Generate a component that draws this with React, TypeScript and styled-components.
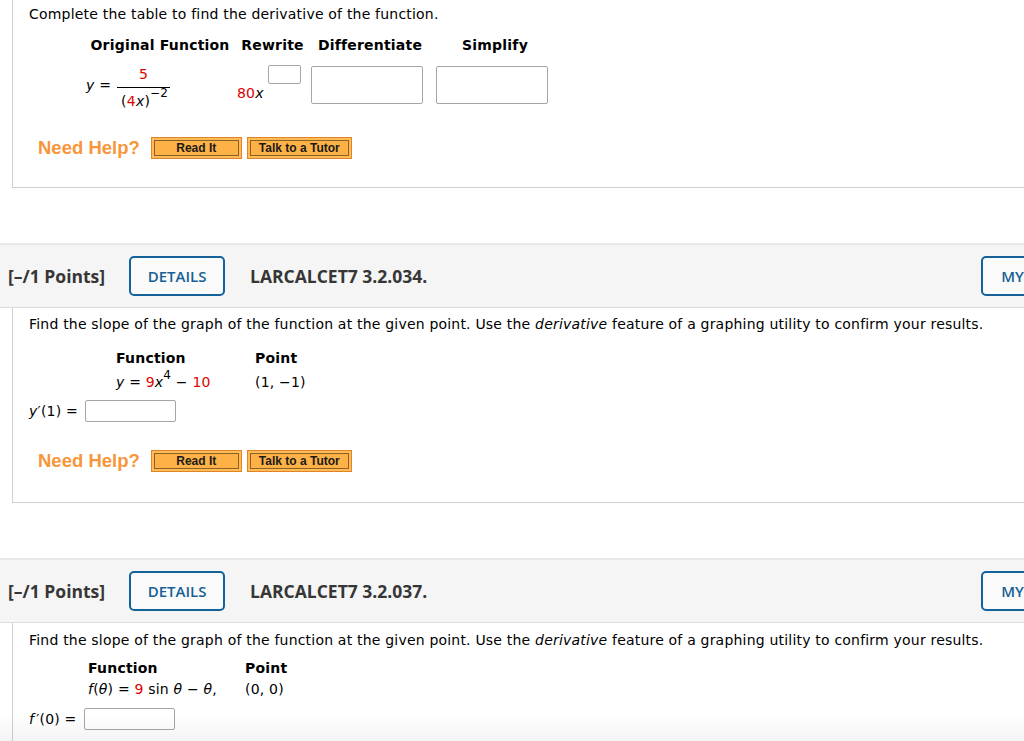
import styled, { createGlobalStyle } from "styled-components";

const GlobalStyle = createGlobalStyle`
    html, body {
        margin: 0;
        padding: 0;
        background: #fff;
        overflow: hidden;
    }
`;

const Page = styled.div`
    width: 1064px;
    font-family: "DejaVu Sans", Verdana, sans-serif;
    font-size: 14px;
    letter-spacing: 0.2px;
    color: #000;
`;

const QuestionBody = styled.div`
    margin-left: 12px;
    border-left: 1px solid #cfcfcf;
    border-bottom: 1px solid #cfcfcf;
    padding: ${(p: { $top: number; $bottom: number }) => `${p.$top}px 0 ${p.$bottom}px 16px`};
`;

const OpenBody = styled.div`
    margin-left: 12px;
    border-left: 1px solid #cfcfcf;
    padding: 9px 0 40px 16px;
`;

const Prompt = styled.div`
    line-height: 17px;
    white-space: nowrap;
`;

const Header = styled.div`
    margin-top: 55px;
    height: 62px;
    border-top: 2px solid #e9e9e9;
    border-bottom: 1px solid #dcdcdc;
    background: #f5f5f5;
    padding: 0 20px 0 8px;
    display: flex;
    align-items: center;
    font-family: "Open Sans", sans-serif;
    font-weight: 700;
    font-size: 17.5px;
    letter-spacing: 0;
    color: #363636;
`;

const Points = styled.span`
    margin-right: 24px;
`;

const OutlineButton = styled.div`
    box-sizing: border-box;
    height: 40px;
    border: 2px solid #13629a;
    border-radius: 5px;
    display: flex;
    align-items: center;
    justify-content: center;
    font-size: 15px;
    font-weight: 600;
    color: #175f95;
    background: #fafafa;
`;

const DetailsButton = styled(OutlineButton)`
    width: 96px;
    margin-right: 25px;
`;

const MyButton = styled(OutlineButton)`
    width: 63px;
    margin-left: auto;
`;

const Code = styled.span`
    color: #363636;
`;

const Red = styled.span`
    color: #e00000;
`;

const I = styled.i``;

const Prime = styled.span`
    margin-left: 2px;
`;

const Sup = styled.sup`
    font-size: 12px;
    line-height: 0;
    vertical-align: ${(p: { $lift?: string }) => p.$lift ?? "8px"};
`;

/* derivative table */
const DerivTable = styled.div`
    margin: 14px 0 0 57px;
    display: grid;
    grid-template-columns: 148px 77px 125px 118px;
    grid-template-rows: 17px 40px;
    row-gap: 11px;
    align-items: center;
`;

const HeadCell = styled.div`
    font-weight: 700;
    text-align: center;
    line-height: 17px;
    padding-right: ${(p: { $pr?: number }) => p.$pr ?? 0}px;
    white-space: nowrap;
`;

const DataCell = styled.div`
    display: flex;
    align-items: center;
    height: 40px;
    padding-left: ${(p: { $pl?: number }) => p.$pl ?? 0}px;
    white-space: nowrap;
`;

const Frac = styled.span`
    display: inline-flex;
    flex-direction: column;
    align-items: center;
    margin: 6px 0 0 6px;
    line-height: 17px;
`;

const Numer = styled.span`
    padding-bottom: 4px;
    border-bottom: 1px solid #000;
    align-self: stretch;
    text-align: center;
`;

const Denom = styled.span`
    padding: 5px 2px 0 4px;
`;

const Box = styled.span`
    display: inline-block;
    box-sizing: border-box;
    width: ${(p: { $w: number; $h: number }) => p.$w}px;
    height: ${(p) => p.$h}px;
    border: 1px solid #a6a6a6;
    border-radius: 2px;
    background: #fff;
`;

const Rewrite = styled.span`
    align-self: flex-start;
    display: inline-flex;
    align-items: flex-start;
    line-height: 17px;
`;

const RewriteText = styled.span`
    margin-top: 20px;
    margin-right: 4px;
`;

/* function / point table */
const FnTable = styled.div`
    margin: ${(p: { $top: number; $left: number; $w: number }) => `${p.$top}px 0 0 ${p.$left}px`};
    display: grid;
    grid-template-columns: ${(p) => p.$w}px auto;
    row-gap: ${(p) => (p.$w > 150 ? 2 : 5)}px;
    white-space: nowrap;
`;

const FnHead = styled.div`
    font-weight: 700;
    line-height: 17px;
`;

const FnCell = styled.div`
    line-height: 20px;
`;

const AnswerRow = styled.div`
    margin-top: ${(p: { $top: number }) => p.$top}px;
    display: flex;
    align-items: center;
    gap: 7px;
    height: 22px;
`;

/* need help */
const HelpRow = styled.div`
    margin: ${(p: { $top: number }) => p.$top}px 0 0 9px;
    display: flex;
    align-items: center;
    height: 22px;
    letter-spacing: 0;
`;

const HelpLabel = styled.span`
    font-family: "Liberation Sans", Arial, sans-serif;
    font-weight: 700;
    font-size: 18.5px;
    color: #f7963a;
    margin-right: 11px;
`;

const HelpButton = styled.div`
    box-sizing: border-box;
    width: ${(p: { $w: number }) => p.$w}px;
    height: 22px;
    margin-right: 5px;
    border: 1px solid #df8428;
    background: #fdb146;
    box-shadow: inset 0 0 0 2px #ffbb55, inset 0 0 0 3px #8f6024;
    display: flex;
    align-items: center;
    justify-content: center;
    font-family: "Liberation Sans", Arial, sans-serif;
    font-weight: 700;
    font-size: 12px;
    color: #1a1a1a;
`;

const BottomFade = styled.div`
    position: fixed;
    left: 0;
    right: 0;
    bottom: 0;
    height: 28px;
    background: linear-gradient(rgba(0, 0, 0, 0), rgba(0, 0, 0, 0.045));
    pointer-events: none;
`;

const NeedHelp = ({ top }: { top: number }) => (
    <HelpRow $top={top}>
        <HelpLabel>Need Help?</HelpLabel>
        <HelpButton $w={91}>Read It</HelpButton>
        <HelpButton $w={105}>Talk to a Tutor</HelpButton>
    </HelpRow>
);

const QuestionHeader = ({ code }: { code: string }) => (
    <Header>
        <Points>[–/1 Points]</Points>
        <DetailsButton>DETAILS</DetailsButton>
        <Code>{code}</Code>
        <MyButton>MY</MyButton>
    </Header>
);

const slopePrompt = (
    <Prompt>
        Find the slope of the graph of the function at the given point. Use the <I>derivative</I> feature of a graphing utility to confirm your results.
    </Prompt>
);

const App = () => {
    return (
        <Page>
            <GlobalStyle />

            <QuestionBody $top={6} $bottom={28}>
                <Prompt>Complete the table to find the derivative of the function.</Prompt>
                <DerivTable>
                    <HeadCell>Original Function</HeadCell>
                    <HeadCell>Rewrite</HeadCell>
                    <HeadCell $pr={7}>Differentiate</HeadCell>
                    <HeadCell>Simplify</HeadCell>

                    <DataCell>
                        <span><I>y</I> =</span>
                        <Frac>
                            <Numer><Red>5</Red></Numer>
                            <Denom>
                                (<Red>4</Red><I>x</I>)<Sup $lift="9px">−2</Sup>
                            </Denom>
                        </Frac>
                    </DataCell>
                    <DataCell $pl={3}>
                        <Rewrite>
                            <RewriteText><Red>80</Red><I>x</I></RewriteText>
                            <Box $w={33} $h={19} />
                        </Rewrite>
                    </DataCell>
                    <DataCell>
                        <Box $w={112} $h={38} />
                    </DataCell>
                    <DataCell>
                        <Box $w={112} $h={38} />
                    </DataCell>
                </DerivTable>
                <NeedHelp top={32} />
            </QuestionBody>

            <QuestionHeader code="LARCALCET7 3.2.034." />
            <QuestionBody $top={8} $bottom={30}>
                {slopePrompt}
                <FnTable $top={17} $left={87} $w={139}>
                    <FnHead>Function</FnHead>
                    <FnHead>Point</FnHead>
                    <FnCell>
                        <I>y</I> = <Red>9</Red><I>x</I><Sup>4</Sup> − <Red>10</Red>
                    </FnCell>
                    <FnCell>(1, −1)</FnCell>
                </FnTable>
                <AnswerRow $top={8}>
                    <span><I>y</I>′(1) =</span>
                    <Box $w={91} $h={22} />
                </AnswerRow>
                <NeedHelp top={28} />
            </QuestionBody>

            <QuestionHeader code="LARCALCET7 3.2.037." />
            <OpenBody>
                {slopePrompt}
                <FnTable $top={11} $left={59} $w={157}>
                    <FnHead>Function</FnHead>
                    <FnHead>Point</FnHead>
                    <FnCell>
                        <I>f</I>(<I>θ</I>) = <Red>9</Red> sin <I>θ</I> − <I>θ</I>,
                    </FnCell>
                    <FnCell>(0, 0)</FnCell>
                </FnTable>
                <AnswerRow $top={9}>
                    <span><I>f</I><Prime>′</Prime>(0) =</span>
                    <Box $w={91} $h={22} />
                </AnswerRow>
            </OpenBody>

            <BottomFade />
        </Page>
    );
};

export default App;
